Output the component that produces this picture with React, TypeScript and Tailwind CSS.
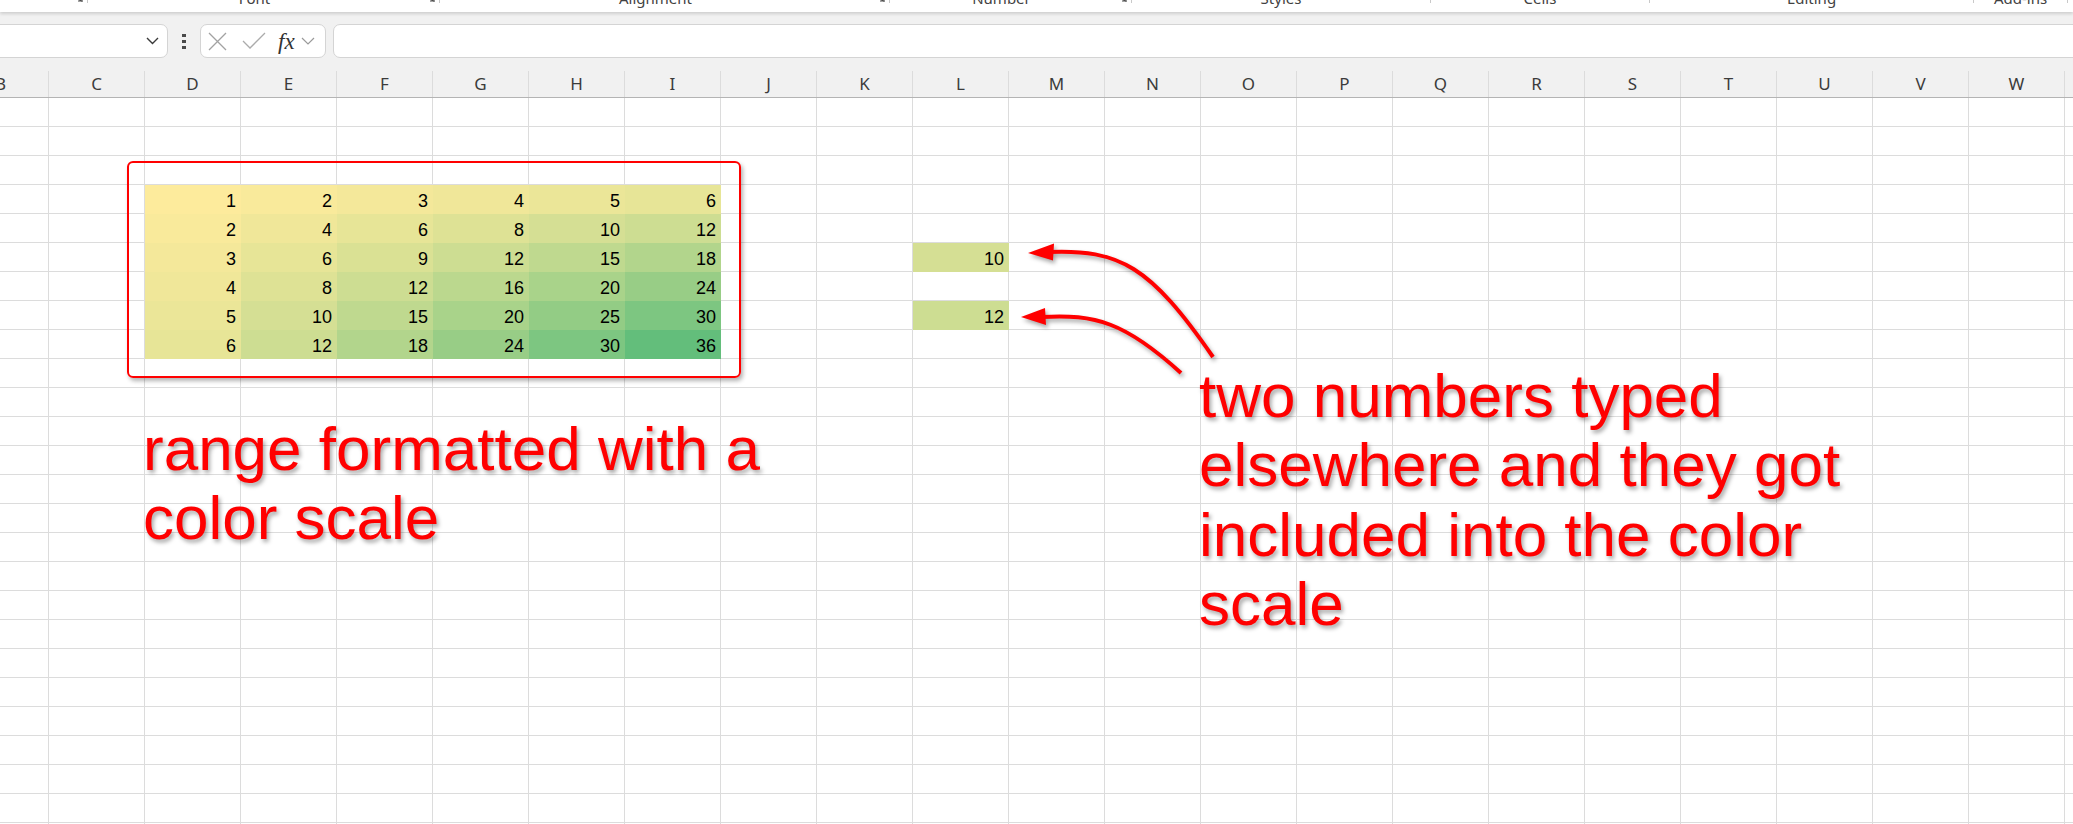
import React from "react";

const COLS = ["B","C","D","E","F","G","H","I","J","K","L","M","N","O","P","Q","R","S","T","U","V","W","X"];
const NROWS = 26;

const MIN_C = [253, 235, 156];
const MAX_C = [99, 190, 123];
function scaleColor(v: number) {
  const t = (v - 1) / 35;
  const c = MIN_C.map((m, i) => Math.round(m + (MAX_C[i] - m) * t));
  return `rgb(${c.join(",")})`;
}

const values: Record<string, number> = {};
for (let r = 0; r < 6; r++) {
  for (let c = 0; c < 6; c++) {
    values[`${r + 3}-${c + 2}`] = (r + 1) * (c + 1);
  }
}
values["5-10"] = 10;
values["7-10"] = 12;

const Launcher = () => (
  <div className="w-[18px] flex justify-center">
    <svg width="10" height="10" viewBox="0 0 10 10">
      <path d="M1 1 H9 V9" fill="none" stroke="#4a4a4a" strokeWidth="1.2" />
      <path d="M3 3 L8 8 M5 8 H8 V5" fill="none" stroke="#4a4a4a" strokeWidth="1.2" />
    </svg>
  </div>
);

const Sep = () => <div className="w-px h-[14px] self-start bg-[#c9c9c9]" />;

function Group({ w, label, launcher }: { w: string; label: string; launcher?: boolean }) {
  return (
    <div className={`flex items-center h-full ${w}`}>
      <div className="flex-1 text-center">{label}</div>
      {launcher && <Launcher />}
      <Sep />
    </div>
  );
}

export default function App() {
  return (
    <div className="relative w-[2073px] h-[824px] overflow-hidden bg-[#f1f1f1] font-['Noto_Sans',sans-serif]">
      {/* Ribbon strip (group labels cut off at top) */}
      <div className="relative z-10 h-[12px] bg-white overflow-hidden shadow-[0_2px_3px_rgba(0,0,0,0.14)]">
        <div className="flex items-center -mt-[11px] h-[18px] text-[15px] leading-[18px] text-[#424242]">
          <div className="w-[88px] flex items-center h-full">
            <div className="flex-1" />
            <Launcher />
            <Sep />
          </div>
          <Group w="w-[352px]" label="Font" launcher />
          <Group w="w-[450px]" label="Alignment" launcher />
          <Group w="w-[242px]" label="Number" launcher />
          <Group w="w-[299px]" label="Styles" />
          <Group w="w-[219px]" label="Cells" />
          <Group w="w-[324px]" label="Editing" />
          <Group w="w-[94px]" label="Add-ins" />
        </div>
      </div>

      {/* Formula bar */}
      <div className="flex items-center h-[34px] mt-[12px]">
        <div className="-ml-[10px] w-[178px] h-[34px] bg-white border border-[#d4d4d4] rounded-[7px] flex items-center justify-end pr-[8px]">
          <svg width="13" height="8" viewBox="0 0 13 8">
            <path d="M1 1 L6.5 6.5 L12 1" fill="none" stroke="#3a3a3a" strokeWidth="1.4" />
          </svg>
        </div>
        <div className="ml-[14px] flex flex-col gap-[3px]">
          <div className="w-[4px] h-[3px] bg-[#4a4a4a]" />
          <div className="w-[4px] h-[3px] bg-[#4a4a4a]" />
          <div className="w-[4px] h-[3px] bg-[#4a4a4a]" />
        </div>
        <div className="ml-[14px] w-[126px] h-[34px] bg-white border border-[#d4d4d4] rounded-[7px] flex items-center pl-[7px]">
          <svg width="19" height="19" viewBox="0 0 19 19">
            <path d="M1 1 L18 18 M18 1 L1 18" fill="none" stroke="#a2a2a2" strokeWidth="1.3" />
          </svg>
          <svg className="ml-[15px]" width="24" height="18" viewBox="0 0 24 18">
            <path d="M1 9 L8 16 L23 1" fill="none" stroke="#ababab" strokeWidth="1.3" />
          </svg>
          <span className="ml-[12px] font-['Liberation_Serif',serif] italic text-[23px] leading-none text-[#333]">fx</span>
          <svg className="ml-[6px]" width="14" height="8" viewBox="0 0 14 8">
            <path d="M1 1 L7 7 L13 1" fill="none" stroke="#9a9a9a" strokeWidth="1.2" />
          </svg>
        </div>
        <div className="ml-[7px] flex-1 -mr-[20px] h-[34px] bg-white border border-[#d4d4d4] rounded-[7px]" />
      </div>

      {/* Column headers */}
      <div className="h-[40px] border-b border-[#b4b4b4] grid grid-cols-[repeat(23,96px)] -ml-[47px] items-end">
        {COLS.map((c) => (
          <div key={c} className="h-[26px] border-r border-[#dcdcdc] flex items-center justify-center text-[17px] text-[#3b3b3b]">
            {c}
          </div>
        ))}
      </div>

      {/* Grid */}
      <div className="bg-white grid grid-cols-[repeat(23,96px)] auto-rows-[29px] -ml-[47px] font-['Liberation_Sans',Arial,sans-serif]">
        {Array.from({ length: NROWS }).map((_, r) =>
          COLS.map((_c, c) => {
            const v = values[`${r}-${c}`];
            return (
              <div
                key={`${r}-${c}`}
                className="border-r border-b border-[#dcdcdc] flex items-end justify-end pr-[4px] pb-[3px] text-[18px] leading-none text-black"
                style={v !== undefined ? { backgroundColor: scaleColor(v), borderColor: "transparent" } : undefined}
              >
                {v !== undefined ? v : ""}
              </div>
            );
          })
        )}
      </div>

      {/* Red rounded rectangle around range */}
      <div className="absolute left-[127px] top-[161px] w-[614px] h-[217px] border-2 border-[#ff0000] rounded-[6px] shadow-[2px_3px_4px_rgba(0,0,0,0.3)]" />

      {/* Arrows */}
      <svg className="absolute left-0 top-0 pointer-events-none drop-shadow-[2px_3px_2px_rgba(0,0,0,0.35)]" width="2073" height="824" viewBox="0 0 2073 824">
        <path d="M1048 252 C1120 249 1150 266 1213 357" fill="none" stroke="#ff0000" strokeWidth="4" />
        <polygon points="1028,253 1054,243.5 1053,260.5" fill="#ff0000" />
        <path d="M1042 317 C1095 314 1125 322 1181 373" fill="none" stroke="#ff0000" strokeWidth="4" />
        <polygon points="1021,317 1045,308 1046,325" fill="#ff0000" />
      </svg>

      {/* Annotations */}
      <div className="absolute left-[143px] top-[414px] font-['Liberation_Sans',Arial,sans-serif] text-[62px] leading-[69px] text-[#ff0000] whitespace-nowrap [text-shadow:2px_3px_4px_rgba(0,0,0,0.35)]">
        range formatted with a<br />color scale
      </div>
      <div className="absolute left-[1199px] top-[361px] font-['Liberation_Sans',Arial,sans-serif] text-[62px] leading-[69.3px] text-[#ff0000] whitespace-nowrap [text-shadow:2px_3px_4px_rgba(0,0,0,0.35)]">
        two numbers typed<br />elsewhere and they got<br />included into the color<br />scale
      </div>
    </div>
  );
}
